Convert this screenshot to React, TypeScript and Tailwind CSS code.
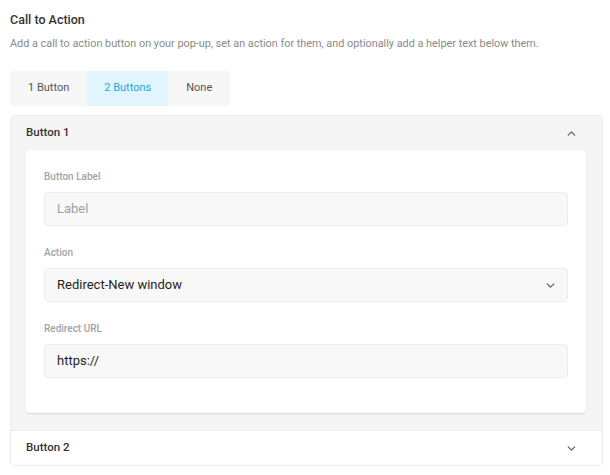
import { ChevronDown, ChevronUp } from 'lucide-react';

const TABS = ['1 Button', '2 Buttons', 'None'];

function Field({ label, children }: { label: string; children: React.ReactNode }) {
  return (
    <div>
      <div className="text-[10px] font-medium leading-[12px] text-[#a3a3a3]">{label}</div>
      <div className="mt-[9px]">{children}</div>
    </div>
  );
}

export default function App() {
  return (
    <div className="h-[475px] w-[610px] bg-white px-[10px] pt-[10px] font-['Roboto',sans-serif]">
      <h2 className="text-[12.5px] font-medium leading-5 text-[#333]">Call to Action</h2>
      <p className="mt-[5px] text-[10.85px] leading-[18px] text-[#8a8a8a]">
        Add a call to action button on your pop-up, set an action for them, and optionally add a helper text below them.
      </p>

      <div className="mt-[18px] inline-flex h-[35px] overflow-hidden rounded-[4px] bg-[#f7f7f7]">
        {TABS.map((t) => (
          <button
            key={t}
            className={`text-[11px] ${
              t === '2 Buttons' ? 'bg-[#e1f5fe] px-[17px] text-[#1ba8e2]' : 'px-[18px] text-[#555]'
            }`}
          >
            {t}
          </button>
        ))}
      </div>

      <div className="mt-[9px] w-[593px] overflow-hidden rounded-[4px] border border-[#ececec]">
        <div className="bg-[#f5f5f5] pl-[15px] pr-[16px] pb-[17px]">
          <div className="flex h-[34px] items-center justify-between">
            <span className="text-[11.5px] font-medium text-[#333]">Button 1</span>
            <ChevronUp size={13} strokeWidth={2.5} className="mr-[8px] text-[#666]" />
          </div>
          <div className="flex flex-col gap-[21px] rounded-[4px] bg-white px-[18px] pt-[21px] pb-[35px] shadow-[0_1px_2px_rgba(0,0,0,0.12)]">
            <Field label="Button Label">
              <div className="flex h-[34px] items-center rounded-[4px] border border-[#ececec] bg-[#f8f8f8] px-3 text-[13px] text-[#a0a0a0]">
                Label
              </div>
            </Field>
            <Field label="Action">
              <div className="flex h-[34px] items-center justify-between rounded-[4px] border border-[#ececec] bg-[#f8f8f8] pl-3 pr-[10px] text-[13px] text-[#1f1f1f]">
                <span>Redirect-New window</span>
                <ChevronDown size={13} strokeWidth={2.5} className="text-[#666]" />
              </div>
            </Field>
            <Field label="Redirect URL">
              <div className="flex h-[34px] items-center rounded-[4px] border border-[#ececec] bg-[#f8f8f8] px-3 text-[13px] text-[#1f1f1f]">
                https://
              </div>
            </Field>
          </div>
        </div>
        <div className="flex h-[35px] items-center justify-between border-t border-[#ececec] bg-white pl-[15px] pr-[16px]">
          <span className="text-[11.5px] font-medium text-[#333]">Button 2</span>
          <ChevronDown size={13} strokeWidth={2.5} className="mr-[8px] text-[#666]" />
        </div>
      </div>
    </div>
  );
}
